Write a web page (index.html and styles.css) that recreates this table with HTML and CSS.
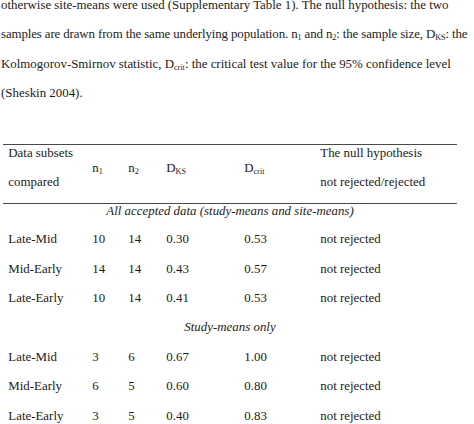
FILE: index.html
```html
<!DOCTYPE html>
<html>
<head>
<meta charset="utf-8">
<link rel="stylesheet" href="styles.css">
</head>
<body>
<p class="caption">otherwise site-means were used (Supplementary Table 1). The null hypothesis: the two<br><span class="tight">samples are drawn from the same underlying population. n<sub>1</sub> and n<sub>2</sub>: the sample size, D<sub>KS</sub>: the</span><br>Kolmogorov-Smirnov statistic, D<sub>crit</sub>: the critical test value for the 95% confidence level<br>(Sheskin 2004).</p>

<div class="table">
  <div class="head">
    <div class="cell stack"><span>Data subsets</span><span>compared</span></div>
    <div class="cell">n<sub>1</sub></div>
    <div class="cell">n<sub>2</sub></div>
    <div class="cell">D<sub>KS</sub></div>
    <div class="cell">D<sub>crit</sub></div>
    <div class="cell stack"><span>The null hypothesis</span><span>not rejected/rejected</span></div>
  </div>
  <div class="body">
    <div class="group first">All accepted data (study-means and site-means)</div>
    <div class="row"><div class="cell">Late-Mid</div><div class="cell">10</div><div class="cell">14</div><div class="cell">0.30</div><div class="cell">0.53</div><div class="cell">not rejected</div></div>
    <div class="row"><div class="cell">Mid-Early</div><div class="cell">14</div><div class="cell">14</div><div class="cell">0.43</div><div class="cell">0.57</div><div class="cell">not rejected</div></div>
    <div class="row"><div class="cell">Late-Early</div><div class="cell">10</div><div class="cell">14</div><div class="cell">0.41</div><div class="cell">0.53</div><div class="cell">not rejected</div></div>
    <div class="group">Study-means only</div>
    <div class="row"><div class="cell">Late-Mid</div><div class="cell">3</div><div class="cell">6</div><div class="cell">0.67</div><div class="cell">1.00</div><div class="cell">not rejected</div></div>
    <div class="row"><div class="cell">Mid-Early</div><div class="cell">6</div><div class="cell">5</div><div class="cell">0.60</div><div class="cell">0.80</div><div class="cell">not rejected</div></div>
    <div class="row"><div class="cell">Late-Early</div><div class="cell">3</div><div class="cell">5</div><div class="cell">0.40</div><div class="cell">0.83</div><div class="cell">not rejected</div></div>
  </div>
</div>
</body>
</html>
```

FILE: styles.css
```css
html, body {
  margin: 0;
  padding: 0;
  background: #ffffff;
}

body {
  font-family: "Liberation Serif", "Times New Roman", serif;
  font-size: 12.9px;
  color: #1c1c1c;
  overflow: hidden;
  height: 424px;
}

sub {
  font-size: 8.2px;
  vertical-align: -2px;
  line-height: 0;
}

.caption {
  margin: -9px 0 0 1px;
  line-height: 29.3px;
  white-space: nowrap;
}

.tight {
  letter-spacing: -0.12px;
}

.table {
  margin: 36px 0 0 3px;
  width: 454px;
}

.head,
.row {
  display: grid;
  grid-template-columns: 84px 36px 38px 78px 76px 1fr;
  align-items: center;
}

.head {
  border-top: 1px solid #4a4a4a;
  border-bottom: 1px solid #4a4a4a;
  padding-bottom: 13px;
  line-height: 16px;
}

.cell {
  padding-left: 5.3px;
  white-space: nowrap;
}

.stack {
  display: flex;
  flex-direction: column;
  gap: 13px;
}

.group {
  text-align: center;
  font-style: italic;
  line-height: 29.4px;
}

.group.first {
  line-height: 14px;
  height: 21px;
}

.row {
  height: 29.4px;
  line-height: 29.4px;
}
```
